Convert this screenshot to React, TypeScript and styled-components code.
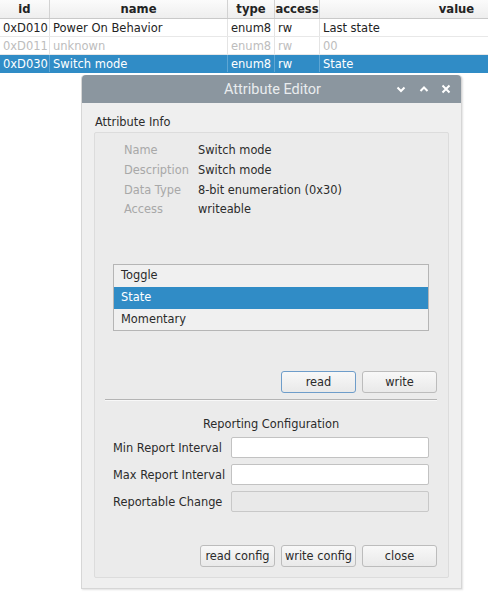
import React from "react";
import styled, { createGlobalStyle } from "styled-components";

const Global = createGlobalStyle`
  html, body { margin: 0; padding: 0; background: #ffffff; }
  body { font-family: "DejaVu Sans", "Liberation Sans", sans-serif; font-size: 11.4px; color: #2b2b2b; }
  #root { position: relative; width: 488px; height: 593px; overflow: hidden; }
`;

const Page = styled.div`
  position: relative;
  width: 488px;
  height: 593px;
  background: #ffffff;
`;

const cols = "50px 178px 47px 45px 274px";

const Table = styled.div`
  display: flex;
  flex-direction: column;
  width: 488px;
  overflow: hidden;
`;

const HeaderRow = styled.div`
  display: grid;
  grid-template-columns: ${cols};
  height: 19px;
  background: linear-gradient(#fbfbfb, #eeeeee);
  border-bottom: 1px solid #c9c9c9;
  box-sizing: border-box;
`;

const HeaderCell = styled.div`
  font-weight: bold;
  font-size: 11.6px;
  text-align: center;
  line-height: 18px;
  border-right: 1px solid #d2d2d2;
  white-space: nowrap;
  color: #232323;
`;

const Row = styled.div<{ $selected?: boolean; $disabled?: boolean }>`
  display: grid;
  grid-template-columns: ${cols};
  height: 18px;
  background: ${(p) => (p.$selected ? "#308cc6" : "#ffffff")};
  color: ${(p) => (p.$selected ? "#ffffff" : p.$disabled ? "#bdbdbd" : "#232323")};
  border-bottom: 1px solid ${(p) => (p.$selected ? "#308cc6" : "#e8e8e8")};
  box-sizing: border-box;
  font-size: 11.5px;
`;

const Cell = styled.div<{ $selected?: boolean }>`
  padding-left: 3px;
  line-height: 18px;
  white-space: nowrap;
  overflow: hidden;
  border-right: 1px solid ${(p) => (p.$selected ? "#5ea6d4" : "#e4e4e4")};
`;

const Dialog = styled.div`
  position: absolute;
  left: 81px;
  top: 75px;
  width: 381px;
  height: 514px;
  box-sizing: border-box;
  background: #efefef;
  border: 1px solid #d6d6d6;
  border-top: none;
  border-radius: 4px 4px 0 0;
  box-shadow: 1px 1px 2px rgba(0, 0, 0, 0.12);
  display: flex;
  flex-direction: column;
`;

const TitleBar = styled.div`
  height: 28px;
  background: #8b969f;
  border-radius: 4px 4px 0 0;
  position: relative;
  display: flex;
  align-items: center;
  justify-content: center;
  color: #e9ecee;
  font-family: "Roboto", "Liberation Sans", sans-serif;
  font-size: 14.5px;
  flex-shrink: 0;
`;

const TitleText = styled.span`
  margin-left: 2px;
`;

const Controls = styled.div`
  position: absolute;
  right: 10px;
  top: 0;
  height: 28px;
  display: flex;
  align-items: center;
  gap: 12.5px;
`;

const Body = styled.div`
  padding: 12px 12px 12px 12px;
  display: flex;
  flex-direction: column;
  flex: 1;
`;

const GroupTitle = styled.div`
  color: #2b2b2b;
  line-height: 14px;
  margin-left: 1px;
  margin-bottom: 3px;
`;

const GroupBox = styled.div`
  flex: 1;
  border: 1px solid #dcdcdc;
  border-radius: 2px;
  background: #ebebeb;
  display: flex;
  flex-direction: column;
  padding: 10px 11px 10px 10px;
`;

const InfoGrid = styled.div`
  display: grid;
  grid-template-columns: 74px 1fr;
  row-gap: 5.8px;
  padding-left: 19px;
  line-height: 14px;
`;

const InfoLabel = styled.div`
  color: #a8a8a8;
`;

const InfoValue = styled.div`
  color: #2b2b2b;
`;

const List = styled.div`
  margin: 48px 8px 0 8px;
  border: 1px solid #b5b5b5;
  background: #f0f0f0;
  display: flex;
  flex-direction: column;
`;

const ListItem = styled.div<{ $selected?: boolean }>`
  height: 21.7px;
  line-height: 21px;
  padding-left: 7px;
  background: ${(p) => (p.$selected ? "#308cc6" : "transparent")};
  color: ${(p) => (p.$selected ? "#ffffff" : "#2b2b2b")};
`;

const ButtonRow = styled.div<{ $top: number }>`
  display: flex;
  justify-content: flex-end;
  gap: 6px;
  margin-top: ${(p) => p.$top}px;
`;

const Button = styled.button<{ $focused?: boolean; $w: number }>`
  width: ${(p) => p.$w}px;
  height: 22px;
  padding: 0;
  box-sizing: border-box;
  font-family: "DejaVu Sans", "Liberation Sans", sans-serif;
  font-size: 11.4px;
  color: #2b2b2b;
  background: linear-gradient(#f8f8f8, #e9e9e9);
  border: 1px solid ${(p) => (p.$focused ? "#6e9dca" : "#bcbcbc")};
  border-radius: 3px;
`;

const Separator = styled.div`
  margin: 6px 0 0 0;
  height: 0;
  border-top: 1px solid #b4b4b4;
  border-bottom: 1px solid #f8f8f8;
`;

const SectionTitle = styled.div`
  text-align: center;
  line-height: 14px;
  margin-top: 16px;
  margin-bottom: 6px;
  color: #2b2b2b;
`;

const FormGrid = styled.div`
  display: grid;
  grid-template-columns: 118px 198px;
  row-gap: 6px;
  padding-left: 8px;
  align-items: center;
`;

const FormLabel = styled.div`
  line-height: 14px;
  white-space: nowrap;
  color: #2b2b2b;
`;

const Input = styled.div<{ $disabled?: boolean }>`
  height: 21px;
  box-sizing: border-box;
  border: 1px solid ${(p) => (p.$disabled ? "#c8c8c8" : "#c2c2c2")};
  border-radius: 2px;
  background: ${(p) => (p.$disabled ? "#e9e9e9" : "#ffffff")};
`;

const Chevron = ({ up }: { up?: boolean }) => (
  <svg width="10" height="8" viewBox="0 0 10 8">
    <path
      d={up ? "M1.5 6 L5 2.5 L8.5 6" : "M1.5 2.5 L5 6 L8.5 2.5"}
      fill="none"
      stroke="#ffffff"
      strokeWidth="2"
    />
  </svg>
);

const Close = () => (
  <svg width="10" height="10" viewBox="0 0 10 10">
    <path d="M1.5 1.5 L8.5 8.5 M8.5 1.5 L1.5 8.5" fill="none" stroke="#ffffff" strokeWidth="2" />
  </svg>
);

const rows = [
  { id: "0xD010", name: "Power On Behavior", type: "enum8", access: "rw", value: "Last state" },
  { id: "0xD011", name: "unknown", type: "enum8", access: "rw", value: "00", disabled: true },
  { id: "0xD030", name: "Switch mode", type: "enum8", access: "rw", value: "State", selected: true },
];

const info = [
  ["Name", "Switch mode"],
  ["Description", "Switch mode"],
  ["Data Type", "8-bit enumeration (0x30)"],
  ["Access", "writeable"],
];

export default function App() {
  return (
    <Page>
      <Global />
      <Table>
        <HeaderRow>
          <HeaderCell>id</HeaderCell>
          <HeaderCell>name</HeaderCell>
          <HeaderCell>type</HeaderCell>
          <HeaderCell>access</HeaderCell>
          <HeaderCell>value</HeaderCell>
        </HeaderRow>
        {rows.map((r) => (
          <Row key={r.id} $selected={r.selected} $disabled={r.disabled}>
            <Cell $selected={r.selected}>{r.id}</Cell>
            <Cell $selected={r.selected}>{r.name}</Cell>
            <Cell $selected={r.selected}>{r.type}</Cell>
            <Cell $selected={r.selected}>{r.access}</Cell>
            <Cell $selected={r.selected}>{r.value}</Cell>
          </Row>
        ))}
      </Table>

      <Dialog>
        <TitleBar>
          <TitleText>Attribute Editor</TitleText>
          <Controls>
            <Chevron />
            <Chevron up />
            <Close />
          </Controls>
        </TitleBar>
        <Body>
          <GroupTitle>Attribute Info</GroupTitle>
          <GroupBox>
            <InfoGrid>
              {info.map(([l, v]) => (
                <React.Fragment key={l}>
                  <InfoLabel>{l}</InfoLabel>
                  <InfoValue>{v}</InfoValue>
                </React.Fragment>
              ))}
            </InfoGrid>
            <List>
              <ListItem>Toggle</ListItem>
              <ListItem $selected>State</ListItem>
              <ListItem>Momentary</ListItem>
            </List>
            <ButtonRow $top={40}>
              <Button $w={75} $focused>read</Button>
              <Button $w={75}>write</Button>
            </ButtonRow>
            <Separator />
            <SectionTitle>Reporting Configuration</SectionTitle>
            <FormGrid>
              <FormLabel>Min Report Interval</FormLabel>
              <Input />
              <FormLabel>Max Report Interval</FormLabel>
              <Input />
              <FormLabel>Reportable Change</FormLabel>
              <Input $disabled />
            </FormGrid>
            <ButtonRow $top={33}>
              <Button $w={75}>read config</Button>
              <Button $w={75}>write config</Button>
              <Button $w={75}>close</Button>
            </ButtonRow>
          </GroupBox>
        </Body>
      </Dialog>
    </Page>
  );
}
